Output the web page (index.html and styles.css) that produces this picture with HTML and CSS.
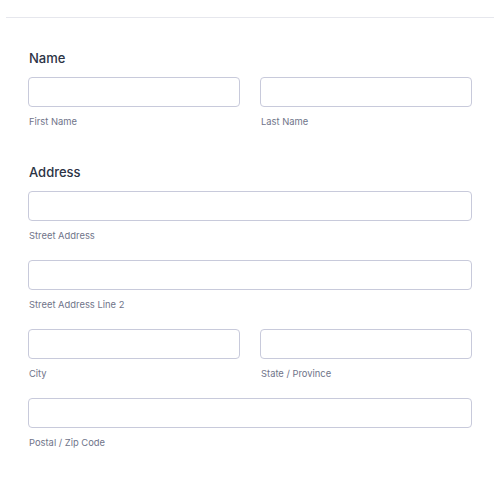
FILE: index.html
```html
<!DOCTYPE html>
<html lang="en">
<head>
<meta charset="utf-8">
<title>Form</title>
<link rel="stylesheet" href="styles.css">
</head>
<body>
<div class="topline"></div>
<form class="form">
  <section class="group group-name">
    <h2 class="group-title">Name</h2>
    <div class="grid">
      <div class="field">
        <input class="input" type="text" aria-label="First Name">
        <label class="sublabel">First Name</label>
      </div>
      <div class="field">
        <input class="input" type="text" aria-label="Last Name">
        <label class="sublabel">Last Name</label>
      </div>
    </div>
  </section>
  <section class="group group-address">
    <h2 class="group-title">Address</h2>
    <div class="grid">
      <div class="field full">
        <input class="input" type="text" aria-label="Street Address">
        <label class="sublabel">Street Address</label>
      </div>
      <div class="field full">
        <input class="input" type="text" aria-label="Street Address Line 2">
        <label class="sublabel">Street Address Line 2</label>
      </div>
      <div class="field">
        <input class="input" type="text" aria-label="City">
        <label class="sublabel">City</label>
      </div>
      <div class="field">
        <input class="input" type="text" aria-label="State / Province">
        <label class="sublabel">State / Province</label>
      </div>
      <div class="field full">
        <input class="input" type="text" aria-label="Postal / Zip Code">
        <label class="sublabel">Postal / Zip Code</label>
      </div>
    </div>
  </section>
</form>
</body>
</html>
```
FILE: styles.css
```css
* { box-sizing: border-box; }
html, body { margin: 0; padding: 0; background: #ffffff; }
body {
  font-family: Inter, "Noto Sans", "Liberation Sans", sans-serif;
  color: #2c3345;
  width: 500px;
  height: 484px;
  overflow: hidden;
}
.topline {
  margin: 17px 6px 0;
  height: 1px;
  background: #e6e7ed;
}
.form {
  padding: 0 28px;
}
.group-title {
  margin: 0 0 11px;
  padding-left: 1px;
  font-size: 13px;
  line-height: 16px;
  font-weight: 500;
  color: #2c3345;
}
.group-name { padding-top: 32px; }
.group-address { padding-top: 35px; }
.grid {
  display: grid;
  grid-template-columns: 1fr 1fr;
  column-gap: 20px;
  row-gap: 17px;
}
.field { display: flex; flex-direction: column; }
.field.full { grid-column: 1 / -1; }
.input {
  display: block;
  width: 100%;
  height: 30px;
  margin: 0;
  padding: 0 8px;
  border: 1px solid #c8cadb;
  border-radius: 4px;
  background: #fff;
  font: inherit;
  outline: none;
}
.sublabel {
  margin-top: 8px;
  padding-left: 1px;
  font-size: 9.4px;
  line-height: 14px;
  color: #6f7489;
}
```
